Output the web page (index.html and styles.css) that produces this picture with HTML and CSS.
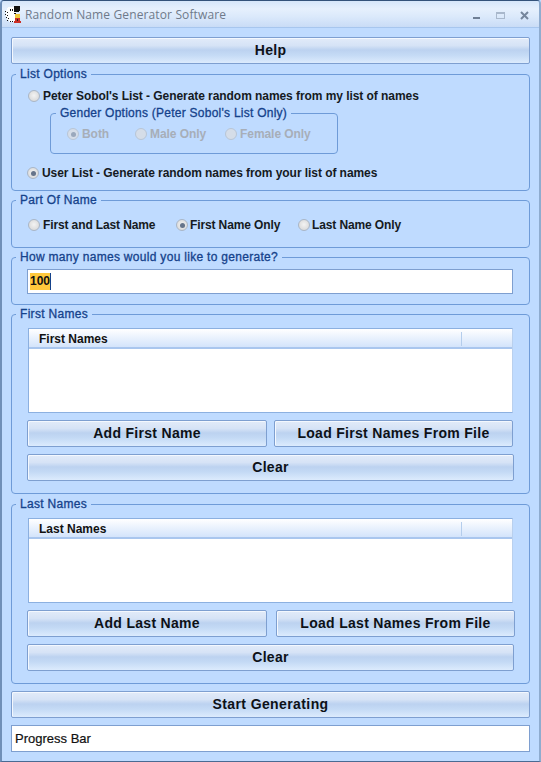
FILE: index.html
```html
<!DOCTYPE html>
<html lang="en">
<head>
<meta charset="utf-8">
<title>Random Name Generator Software</title>
<link rel="stylesheet" href="styles.css">
</head>
<body>
<div class="window">
  <header class="titlebar">
    <svg class="app-icon" width="16" height="17" viewBox="0 0 16 17" shape-rendering="crispEdges">
      <path d="M3 1h7v2h1v6h1v2h-1v5H4v-2H2v-3H1V4h1V2h1z" fill="#fff"/>
      <path d="M9 0h6v5h-1v1H9zM5 3h1v2H5zM7 3h1v2H7zM0 5h1v1H0zM2 6h1v1H2zM0 8h1v1H0zM2 9h1v1H2zM1 11h1v1H1zM3 12h1v1H3zM2 14h1v1H2zM5 15h1v1H5zM7 15h1v1H7zM9 7h2v1H9z" fill="#111"/>
      <path d="M10 8h5v4h-5z" fill="#eec83a"/>
      <path d="M10 12h5v3h-5zM9 15h7v2H9z" fill="#cc2f26"/>
      <path d="M12 13h1v2h-1z" fill="#222"/>
    </svg>
    <span class="title">Random Name Generator Software</span>
    <div class="controls">
      <svg width="10" height="10" viewBox="0 0 10 10"><rect x="0" y="7" width="7" height="2" fill="#6f7f95"/></svg>
      <svg width="10" height="10" viewBox="0 0 10 10"><rect x=".5" y="2.500" width="8" height="6" fill="none" stroke="#a9b8cc"/><rect x="1" y="2" width="8" height="2" fill="#a9b8cc"/></svg>
      <svg class="ctl-close" width="10" height="10" viewBox="0 0 10 10"><path d="M1 2L8 9M8 2L1 9" stroke="#76869c" stroke-width="2"/></svg>
    </div>
  </header>
  <main class="content">
    <button class="btn btn-help">Help</button>

    <fieldset class="group group-list">
      <legend>List Options</legend>
      <label class="radio radio-peter"><span class="dot"></span>Peter Sobol's List - Generate random names from my list of names</label>
      <fieldset class="group group-gender">
        <legend>Gender Options (Peter Sobol's List Only)</legend>
        <div class="row row-gender">
          <label class="radio off w-both"><span class="dot on"></span>Both</label>
          <label class="radio off w-male"><span class="dot"></span>Male Only</label>
          <label class="radio off"><span class="dot"></span>Female Only</label>
        </div>
      </fieldset>
      <label class="radio radio-user"><span class="dot on"></span>User List - Generate random names from your list of names</label>
    </fieldset>

    <fieldset class="group group-part">
      <legend>Part Of Name</legend>
      <div class="row">
        <label class="radio w-fl"><span class="dot"></span>First and Last Name</label>
        <label class="radio w-fo"><span class="dot on"></span>First Name Only</label>
        <label class="radio w-lo"><span class="dot"></span>Last Name Only</label>
      </div>
    </fieldset>

    <fieldset class="group group-count">
      <legend>How many names would you like to generate?</legend>
      <div class="input"><span class="selected">100</span><span class="caret"></span></div>
    </fieldset>

    <fieldset class="group group-names">
      <legend>First Names</legend>
      <div class="table">
        <div class="thead"><span class="th">First Names</span><span class="th-end"></span></div>
      </div>
      <div class="btn-row">
        <button class="btn btn-a1">Add First Name</button>
        <button class="btn btn-a2">Load First Names From File</button>
      </div>
      <button class="btn btn-clear">Clear</button>
    </fieldset>

    <fieldset class="group group-names group-last">
      <legend>Last Names</legend>
      <div class="table">
        <div class="thead"><span class="th">Last Names</span><span class="th-end"></span></div>
      </div>
      <div class="btn-row">
        <button class="btn btn-a1">Add Last Name</button>
        <button class="btn btn-a3">Load Last Names From File</button>
      </div>
      <button class="btn btn-clear">Clear</button>
    </fieldset>

    <button class="btn btn-start">Start Generating</button>
    <div class="progress">Progress Bar</div>
  </main>
</div>
</body>
</html>
```
FILE: styles.css
```css
* { box-sizing: border-box; }
html, body { margin: 0; padding: 0; }
body { width: 541px; height: 762px; overflow: hidden; font-family: "Liberation Sans", Arial, sans-serif; background: #bfdbff; }
.window { width: 541px; height: 762px; display: flex; flex-direction: column; background: #bfdbff; border: 1px solid #4a6a92; border-top-color: #34527a; border-left: 2px solid #6f8fb8; border-right: 2px solid #8faccf; border-radius: 4px 4px 0 0; overflow: hidden; }
.titlebar { height: 27px; flex: none; display: flex; align-items: center; padding: 0 9px 0 3px; background: linear-gradient(#d6e6fa 0, #e6f0fd 30%, #dbe9fb 60%, #c9dcf6 100%); border-bottom: 1px solid #a7c6ee; }
.app-icon { flex: none; }
.title { margin-left: 4px; font: 12px "Open Sans", sans-serif; color: #6f7a8a; letter-spacing: .13px; }
.controls { margin-left: auto; margin-top: 1px; display: flex; gap: 13px; }
.ctl-close { margin-left: 1px; }
.content { flex: 1; display: flex; flex-direction: column; padding: 9px 9px 0 9px; }
.btn { display: block; height: 27px; padding: 0 0 2px; border: 1px solid #7e9fd0; border-radius: 2px; background: linear-gradient(#e2ebf9 0, #d6e3f6 30%, #bcd2f0 48%, #c4daf5 68%, #dcebfd 100%); font: bold 14px "Liberation Sans", sans-serif; letter-spacing: .3px; color: #0d1117; box-shadow: inset 1px 1px 0 #f4f8fe; }
.btn-help { width: 519px; }
.group { margin: 0; min-width: 0; padding: 0; border: 1px solid #6e9bd8; border-radius: 4px; background: transparent; }
.group legend { margin-left: -12px; padding: 0 4px; font: 12px/14px "Liberation Sans", sans-serif; font-weight: 400; letter-spacing: .3px; color: #15428b; -webkit-text-stroke: .3px #15428b; }
.group .group-gender legend { margin-left: 5px; letter-spacing: .25px; }
.group-count legend { margin-left: -11px; }
.radio { display: flex; align-items: center; font: bold 12px/14px "Liberation Sans", sans-serif; letter-spacing: -.06px; color: #151a22; white-space: nowrap; }
.dot { flex: none; width: 12px; height: 12px; margin-right: 3px; border-radius: 50%; border: 1px solid #aab6c6; background: radial-gradient(circle at 50% 45%, #f3f3f3 0, #dcdcdc 70%); display: flex; align-items: center; justify-content: center; }
.dot.on::after { content: ""; width: 5px; height: 5px; border-radius: 50%; background: #66748a; }
.off { color: #a7aeb8; }
.off .dot { border-color: #b8c5d6; background: #d5dde8; }
.off .dot.on::after { background: #9aa8bc; }
.row { display: flex; }
.group-list { width: 519px; height: 124px; margin-top: 3px; padding: 0 0 0 16px; }
.radio-peter { margin-top: 8px; }
.group-gender { width: 288px; height: 48px; margin: 3px 0 0 22px; }
.row-gender { padding: 7px 0 0 16px; }
.w-both { width: 68px; }
.w-male { width: 90px; }
.radio-user { margin-top: 12px; margin-left: -1px; }
.group-part { width: 519px; height: 55px; margin-top: 2px; padding: 11px 0 0 16px; }
.group-part .radio { letter-spacing: -.12px; }
.w-fl { width: 148px; }
.w-fo { width: 122px; }
.w-fo .dot, .w-lo .dot { margin-right: 2px; }
.group-count { width: 519px; height: 55px; margin-top: 2px; padding: 5px 0 0 15px; }
.input { width: 486px; height: 25px; display: flex; align-items: center; padding-left: 2px; background: #fff; border: 1px solid #7e9fd0; font: bold 12px "Liberation Sans", sans-serif; color: #111; }
.selected { background: #ffc83c; line-height: 17px; }
.caret { width: 1px; height: 17px; background: #15428b; }
.group-names { width: 519px; height: 187px; margin-top: 2px; padding: 7px 0 0 16px; }
.group-last { margin-top: 3px; }
.table { width: 485px; height: 85px; background: #fff; border: 1px solid #8cb0e0; border-right-color: #b9d0ee; }
.thead { height: 20px; display: flex; align-items: center; padding: 2px 0 0 10px; background: linear-gradient(#fff 0, #d3e4fb 100%); border-bottom: 2px solid #a9c6ee; }
.th { font: bold 12px "Liberation Sans", sans-serif; color: #111; flex: 1; }
.th-end { width: 51px; height: 14px; border-left: 1px solid #b4cdec; }
.btn-row { display: flex; margin: 7px 0 0 -1px; }
.btn-a1 { width: 240px; }
.btn-a2 { width: 239px; margin-left: 7px; }
.btn-a3 { width: 239px; margin-left: 9px; }
.btn-clear { width: 487px; margin: 7px 0 0 -1px; }
.btn-start { width: 519px; margin-top: 7px; letter-spacing: .4px; }
.progress { width: 519px; height: 27px; margin-top: 7px; padding-left: 3px; background: #fff; border: 1px solid #7e9fd0; font: 13px/25px "Liberation Sans", sans-serif; -webkit-text-stroke: .2px #111; color: #111; }
```
